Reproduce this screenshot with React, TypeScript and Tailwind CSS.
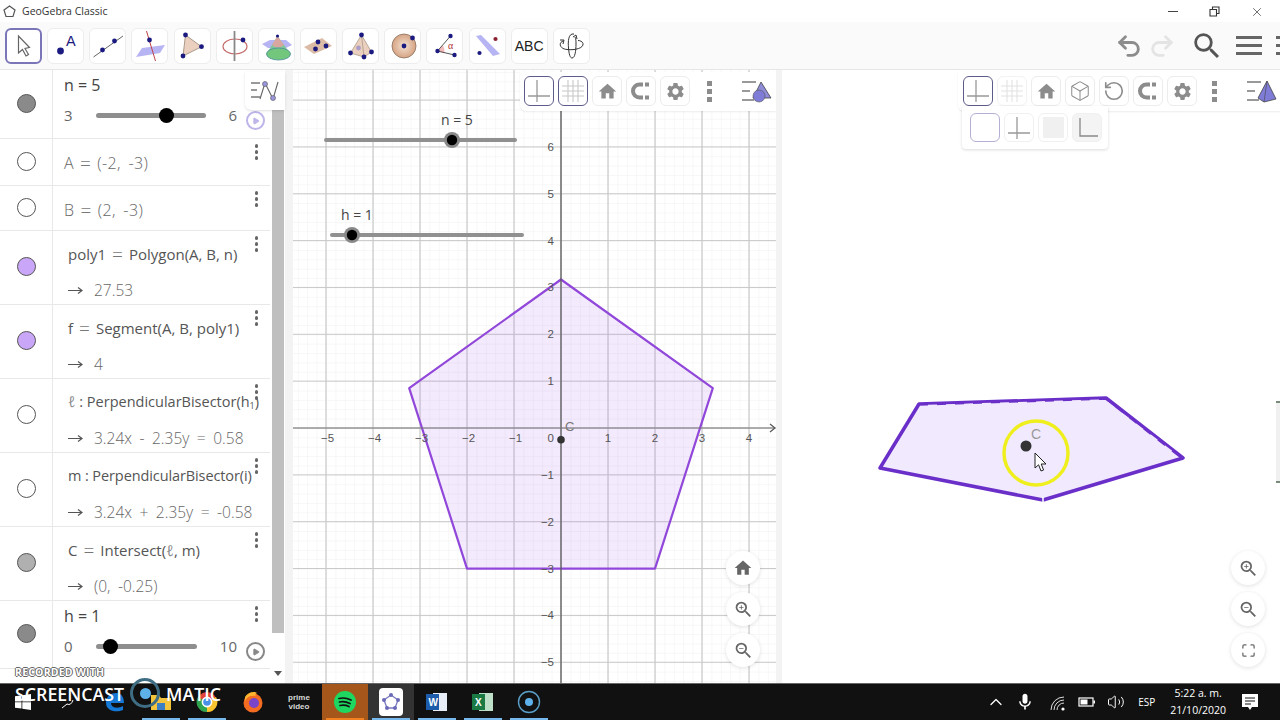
import { Maximize, Undo2, Redo2, Play, X, ChevronUp, Volume2, Box, RotateCw } from "lucide-react";
import { MdHome, MdSettings, MdZoomIn, MdZoomOut, MdSearch, MdMic } from "react-icons/md";
import type { ReactNode } from "react";

const mathFont = "font-['Open_Sans',sans-serif]";
const NAVY = "#1a1a80";

function ToolBtn({ selected, children }: { selected?: boolean; children: ReactNode }) {
  return (
    <div className={`flex h-9 w-[37px] items-center justify-center rounded-md bg-white ${selected ? "border-2 border-[#7a76b8]" : "border border-[#ededed]"}`}>
      <svg width="32" height="32" viewBox="0 0 32 32">{children}</svg>
    </div>
  );
}

const Dot = ({ x, y, r = 2.4, c = NAVY }: { x: number; y: number; r?: number; c?: string }) => <circle cx={x} cy={y} r={r} fill={c} />;

function Toolbar() {
  return (
    <div className="flex h-12 shrink-0 items-center border-b border-[#e6e6e6] bg-[#fafafa] pl-[5px]">
      <div className="flex gap-[5.15px]">
        <ToolBtn selected><path d="M10.5 6 L10.5 23 L14.5 19.5 L18 26 L20.5 24.5 L17 18.5 L21.5 17.5 Z" fill="#fff" stroke="#666" strokeWidth="1.2" /></ToolBtn>
        <ToolBtn><Dot x={10.5} y={21} r={3.4} /><text x="16" y="16" fontSize="14.5" fill={NAVY} fontFamily="Liberation Sans">A</text></ToolBtn>
        <ToolBtn>
          <line x1="1.5" y1="27" x2="31" y2="6" stroke="#666" strokeWidth="1" />
          <Dot x={10.5} y={20} /><Dot x={22.5} y={11} />
        </ToolBtn>
        <ToolBtn>
          <polygon points="2,27 8,18 31,15 26,23" fill="#b7b4f4" />
          <line x1="12.5" y1="1" x2="21.5" y2="31" stroke="#c0404a" strokeWidth="1" />
          <Dot x={15.5} y={10} />
        </ToolBtn>
        <ToolBtn>
          <polygon points="9.5,5 7,26 25.5,16.7" fill="#ecd0bf" stroke="#a98" strokeWidth="1" />
          <Dot x={9.5} y={5} /><Dot x={7} y={26} /><Dot x={25.5} y={16.7} />
        </ToolBtn>
        <ToolBtn>
          <ellipse cx="17" cy="16.5" rx="12" ry="7.5" fill="#fff" stroke="#c46a6a" strokeWidth="1.1" />
          <line x1="16.5" y1="1" x2="16.5" y2="31" stroke="#888" strokeWidth="1.8" />
          <Dot x={25} y={10} />
        </ToolBtn>
        <ToolBtn>
          <polygon points="2,14 10,10 26,10 32,15 26,18 8,18" fill="#b7b4f4" />
          <polygon points="17.5,6 6.5,24 30.5,24" fill="#7fc79a" />
          <path d="M12 15 Q18 20 24 15 L17.5 6 Z" fill="#d9a7a0" />
          <ellipse cx="18.5" cy="24" rx="12" ry="6" fill="#73c77d" stroke="#4a8a9a" strokeWidth="0.8" />
          <Dot x={17.5} y={6} r={1.6} />
        </ToolBtn>
        <ToolBtn>
          <polygon points="2,17 20,8 30,16 12,24" fill="#dcbba6" />
          <Dot x={16} y={12} /><Dot x={13.5} y={19} /><Dot x={24} y={16} />
        </ToolBtn>
        <ToolBtn>
          <polygon points="16.5,5 5.5,23 19,27 26.5,22" fill="#ecd0bf" stroke="#a98" strokeWidth="0.8" />
          <path d="M16.5 5 L19 27" stroke="#a98" strokeWidth="0.8" />
          <circle cx="13.5" cy="18" r="2.4" fill="#a99cc6" />
          <Dot x={16.5} y={5} /><Dot x={5.5} y={23} /><Dot x={26.5} y={22} /><Dot x={19} y={27} />
        </ToolBtn>
        <ToolBtn>
          <defs>
            <radialGradient id="sphere"><stop offset="0" stopColor="#f3e0d2" /><stop offset="1" stopColor="#d6a483" /></radialGradient>
          </defs>
          <circle cx="17" cy="16" r="12" fill="url(#sphere)" stroke="#8a7060" strokeWidth="0.8" />
          <Dot x={17} y={16} /><Dot x={25.5} y={8} />
        </ToolBtn>
        <ToolBtn>
          <path d="M8.5 21 L14 15.5 Q16 19 15.5 23.5 Z" fill="#f4b8b8" />
          <path d="M21.5 6 L8.5 21 L25.5 25" fill="none" stroke="#555" strokeWidth="1" />
          <text x="19" y="19" fontSize="10" fill="#b03030" fontFamily="Liberation Serif">α</text>
          <Dot x={21.5} y={6} r={2.2} /><Dot x={8.5} y={21} r={2.2} /><Dot x={25.5} y={25} r={2.2} />
        </ToolBtn>
        <ToolBtn>
          <polygon points="5,6 10,5 29,24 22,26" fill="#b7b4f4" />
          <Dot x={8.5} y={23} r={2.1} /><Dot x={24.5} y={9} r={2.1} c="#8a2030" />
        </ToolBtn>
        <div className="flex h-9 w-[37px] items-center justify-center rounded-md border border-[#ededed] bg-white font-['Liberation_Sans',sans-serif] text-sm text-[#222]">ABC</div>
        <ToolBtn>
          <path d="M8 11 C3 13 5 19 12 19.5 C20 20.5 29 18 28 13.5 C27.5 11.5 25 10.5 23 10.5" fill="none" stroke="#333" strokeWidth="1" />
          <path d="M19 4 C13 3 13 12 13.5 18 C14 24 15 28 17 28 C20 28 21 21 21 14 C21 11 21 9 20 7" fill="none" stroke="#333" strokeWidth="1" />
          <path d="M5 10 L9 10 L8 14 M18 7 L21 5 L22 9" fill="none" stroke="#333" strokeWidth="1" />
        </ToolBtn>
      </div>
      <div className="ml-auto flex items-center overflow-hidden text-[#8c8c8c]">
        <Undo2 className="mr-[5px] h-7 w-7" strokeWidth={2.4} />
        <Redo2 className="mr-[14px] h-7 w-7 text-[#e4e4e4]" strokeWidth={2.4} />
        <MdSearch className="mr-[12px] h-[34px] w-[34px] text-[#555]" />
        <div className="mr-[14px] flex w-[26px] flex-col gap-[5px]">
          <span className="h-[3px] bg-[#666]" /><span className="h-[3px] bg-[#666]" /><span className="h-[3px] bg-[#666]" />
        </div>
        <div className="-mr-[14px] flex w-[18px] flex-col gap-[5px]">
          <span className="h-[3px] bg-[#666]" /><span className="h-[3px] bg-[#666]" /><span className="h-[3px] bg-[#666]" />
        </div>
      </div>
    </div>
  );
}

function Marble({ fill }: { fill: string }) {
  return <span className="h-[19px] w-[19px] rounded-full border border-[#555]" style={{ background: fill }} />;
}

function AlgebraRow({ h, fill, children, noDots }: { h: string; fill: string; children: ReactNode; noDots?: boolean }) {
  return (
    <div className={`relative flex shrink-0 border-b border-[#e8e8e8] ${h}`}>
      <div className="flex w-[53px] shrink-0 items-center justify-center border-r border-[#e8e8e8] pb-[2px]">
        <Marble fill={fill} />
      </div>
      <div className={`min-w-0 flex-1 whitespace-nowrap text-[15px] text-[#555] ${mathFont}`}>{children}</div>
      {!noDots && (
        <div className="absolute right-[12px] top-[5px] flex flex-col gap-[2.5px]">
          <span className="h-[3.5px] w-[3.5px] rounded-full bg-[#666]" />
          <span className="h-[3.5px] w-[3.5px] rounded-full bg-[#666]" />
          <span className="h-[3.5px] w-[3.5px] rounded-full bg-[#666]" />
        </div>
      )}
    </div>
  );
}

const Eq = () => <span className="mx-[6px] align-[-1px] text-[19px] font-light leading-none text-[#777]">=</span>;

function Arrow() {
  return (
    <svg className="mr-[11px] shrink-0" width="15" height="9" viewBox="0 0 15 9">
      <path d="M0 4.5H14M10 1.5L14 4.5L10 7.5" fill="none" stroke="#555" strokeWidth="1.2" />
    </svg>
  );
}

function TwoLine({ top, bottom, topClass }: { top: ReactNode; bottom: string; topClass?: string }) {
  return (
    <div className="flex h-full flex-col justify-between pb-[2px] pl-[15px] pt-[13px]">
      <div className={`leading-[20px] ${topClass ?? ""}`}>{top}</div>
      <div className="flex items-center text-[15.5px] font-light text-[#666] [word-spacing:3.5px]">
        <Arrow />
        {bottom}
      </div>
    </div>
  );
}

function SliderLine({ label, min, max, pos, w, playColor }: { label: string; min: string; max: string; pos: string; w: string; playColor: string }) {
  return (
    <div className="relative h-full pl-[11px] pt-[3px] text-[16px]">
      <div className="leading-[24px] text-[#444]">{label}</div>
      <div className="mt-[6px] flex items-center leading-[24px] text-[#666]">
        <span className="w-[32px] text-[15px]">{min}</span>
        <div className={`relative h-[5px] rounded-sm bg-[#8e8e8e] ${w}`}>
          <span className={`absolute -top-[5px] h-[15px] w-[15px] rounded-full bg-black ${pos}`} />
        </div>
      </div>
      <span className="absolute right-[33px] top-[33px] text-[15px] leading-[24px] text-[#666]">{max}</span>
      <span className={`absolute right-[5px] top-[41px] flex h-[19px] w-[19px] items-center justify-center rounded-full border-2 ${playColor}`}>
        <Play className="h-2 w-2 fill-current" />
      </span>
    </div>
  );
}

const Ell = () => <i className="text-[#888]">ℓ</i>;

function AlgebraPanel() {
  return (
    <div className="relative flex w-[285px] shrink-0 bg-white">
      <div className="flex w-[270px] shrink-0 flex-col">
        <AlgebraRow h="h-[69px]" fill="#8a8a8a" noDots>
          <SliderLine label="n = 5" min="3" max="6" pos="left-[63px]" w="w-[110px]" playColor="text-[#bdb6ea] border-[#bdb6ea]" />
        </AlgebraRow>
        <AlgebraRow h="h-[47px]" fill="#fff"><div className="pl-[11px] pt-[12px] text-[16px] font-light tracking-[0.4px] text-[#666] [word-spacing:3px]">A<Eq />(-2, -3)</div></AlgebraRow>
        <AlgebraRow h="h-[45px]" fill="#fff"><div className="pl-[11px] pt-[12px] text-[16px] font-light tracking-[0.4px] text-[#666] [word-spacing:3px]">B<Eq />(2, -3)</div></AlgebraRow>
        <AlgebraRow h="h-[74px]" fill="#c9a6f7"><TwoLine top={<>poly1<Eq />Polygon(A, B, n)</>} bottom="27.53" /></AlgebraRow>
        <AlgebraRow h="h-[74px]" fill="#c9a6f7"><TwoLine top={<>f<Eq />Segment(A, B, poly1)</>} bottom="4" /></AlgebraRow>
        <AlgebraRow h="h-[74px]" fill="#fff"><TwoLine topClass="text-[14.5px]" top={<><Ell /> : PerpendicularBisector(h<sub className="text-[9px]">1</sub>)</>} bottom="3.24x - 2.35y = 0.58" /></AlgebraRow>
        <AlgebraRow h="h-[74px]" fill="#fff"><TwoLine topClass="text-[14.5px] tracking-[-0.1px]" top="m : PerpendicularBisector(i)" bottom="3.24x + 2.35y = -0.58" /></AlgebraRow>
        <AlgebraRow h="h-[74px]" fill="#b0b0b0"><TwoLine top={<>C<Eq />Intersect(<Ell />, m)</>} bottom="(0, -0.25)" /></AlgebraRow>
        <AlgebraRow h="h-[68px]" fill="#8a8a8a">
          <SliderLine label="h = 1" min="0" max="10" pos="left-[7px]" w="w-[101px]" playColor="text-[#888] border-[#888]" />
        </AlgebraRow>
      </div>
      <div className="flex flex-1 flex-col pt-[40px]">
        <div className="mx-auto h-[523px] w-[12px] bg-[#bfbfbf]" />
        <div className="mx-auto mt-[38px] h-0 w-0 border-x-[4px] border-t-[5px] border-x-transparent border-t-[#555]" />
      </div>
      <div className="absolute right-0 top-[2px] flex h-[38px] w-[40px] items-center justify-center rounded-bl-md bg-white shadow-sm">
        <svg width="30" height="24" viewBox="0 0 30 24">
          <path d="M1 4h9M1 11h6M1 18h9" stroke="#999" strokeWidth="2" />
          <path d="M10 20 L15 4 L23 20 L28 3" fill="none" stroke="#666" strokeWidth="1.1" />
          <circle cx="15" cy="5" r="2.5" fill="#9a96dd" stroke="#555" strokeWidth="0.6" />
          <circle cx="23" cy="19" r="2.5" fill="#9a96dd" stroke="#555" strokeWidth="0.6" />
        </svg>
      </div>
    </div>
  );
}

function GridSvg() {
  const xs = [-5, -4, -3, -2, -1, 1, 2, 3, 4];
  const ys = [6, 5, 4, 3, 2, 1, -1, -2, -3, -4, -5];
  const X = (v: number) => 268 + v * 47;
  const Y = (v: number) => 358 - v * 46.85;
  return (
    <svg className="absolute inset-0" width="483" height="613">
      <defs>
        <pattern id="minor" x="268" y="358" width="9.4" height="9.37" patternUnits="userSpaceOnUse">
          <path d="M9.4 0H0V9.37" fill="none" stroke="#f0f0f0" strokeWidth="1" />
        </pattern>
      </defs>
      <rect width="483" height="613" fill="url(#minor)" />
      {[-5, -4, -3, -2, -1, 0, 1, 2, 3, 4].map((v) => <line key={v} x1={X(v)} x2={X(v)} y1="0" y2="613" stroke="#cdcdcd" strokeWidth="1.3" />)}
      {[-5, -4, -3, -2, -1, 0, 1, 2, 3, 4, 5, 6, 7, 8].map((v) => <line key={v} y1={Y(v)} y2={Y(v)} x1="0" x2="483" stroke="#c8c8c8" />)}
      <polygon points={`${X(-2)},${Y(-3)} ${X(2)},${Y(-3)} ${X(3.23)},${Y(0.85)} ${X(0)},${Y(3.17)} ${X(-3.23)},${Y(0.85)}`} fill="#b46cf0" fillOpacity="0.14" stroke="#9148da" strokeWidth="2.2" strokeLinejoin="round" />
      <line x1={X(0)} x2={X(0)} y1="40" y2="613" stroke="#555" strokeWidth="1.2" />
      <line x1="0" x2="481" y1={Y(0)} y2={Y(0)} stroke="#777" strokeWidth="1.2" />
      <path d="M477 354 L482 358 L477 362" fill="none" stroke="#555" strokeWidth="1.2" />
      {xs.map((v) => (
        <text key={v} x={X(v) + (v < 0 ? 1.5 : 0)} y={Y(0) + 14} textAnchor="middle" fontSize="11.5" fill="#555" fontFamily="Liberation Sans">{v < 0 ? `−${-v}` : v}</text>
      ))}
      {ys.map((v) => (
        <text key={v} x={X(0) - 7} y={Y(v) + 4} textAnchor="end" fontSize="11.5" fill="#555" fontFamily="Liberation Sans">{v < 0 ? `−${-v}` : v}</text>
      ))}
      <text x={X(0) - 7} y={Y(0) + 14} textAnchor="end" fontSize="11.5" fill="#555" fontFamily="Liberation Sans">0</text>
      <circle cx={X(0)} cy={Y(-0.25)} r="3.8" fill="#333" />
      <text x={X(0) + 4} y={Y(0) + 3} fontSize="13" fill="#777" fontFamily="Liberation Sans">C</text>
      {/* sliders drawn on the view */}
      <line x1="33" x2="222" y1="70" y2="70" stroke="#909090" strokeWidth="4" strokeLinecap="round" />
      <circle cx="159" cy="70" r="8" fill="#888" />
      <circle cx="159" cy="70" r="5.2" fill="#000" />
      <text x="148" y="55" fontSize="14" fill="#444" fontFamily="Open Sans">n = 5</text>
      <line x1="39" x2="229" y1="165" y2="165" stroke="#909090" strokeWidth="4" strokeLinecap="round" />
      <circle cx="59" cy="165" r="8" fill="#888" />
      <circle cx="59" cy="165" r="5.2" fill="#000" />
      <text x="48" y="150" fontSize="14" fill="#444" fontFamily="Open Sans">h = 1</text>
    </svg>
  );
}

function SmallBtn({ active, dim, children }: { active?: boolean; dim?: boolean; children: ReactNode }) {
  return (
    <div className={`flex h-[30px] w-[30px] items-center justify-center rounded-md bg-white ${active ? "border border-[#5c5c8a]" : dim ? "border border-[#f2f2f2]" : "border border-[#ececec]"}`}>
      {children}
    </div>
  );
}

const AxesIcon = () => <svg width="24" height="24" viewBox="0 0 24 24"><path d="M10 1V23M1 17H23" stroke="#999" strokeWidth="1.3" /></svg>;
const GridIcon = ({ c = "#c8c8c8" }: { c?: string }) => <svg width="24" height="24" viewBox="0 0 24 24"><path d="M7 1V23M12 1V23M17 1V23M1 7H23M1 12H23M1 17H23" stroke={c} strokeWidth="1.1" /></svg>;
const HomeIcon = () => <MdHome className="h-[21px] w-[21px] text-[#8c8c8c]" />;
const GearIcon = () => <MdSettings className="h-[21px] w-[21px] text-[#8c8c8c]" />;

function MagnetIcon() {
  return (
    <svg width="22" height="20" viewBox="0 0 22 20">
      <path d="M13 3.5H9.5A6.5 6.5 0 0 0 9.5 16.5H13" fill="none" stroke="#8c8c8c" strokeWidth="4" />
      <path d="M15 3.5H19M15 16.5H19" stroke="#8c8c8c" strokeWidth="4" />
    </svg>
  );
}

function StyleIcon({ children }: { children: ReactNode }) {
  return (
    <svg width="32" height="26" viewBox="0 0 32 26">
      <path d="M0 4h14M0 13h8M0 22h12" stroke="#999" strokeWidth="2" />
      {children}
    </svg>
  );
}

function SquareDots({ className }: { className: string }) {
  return (
    <div className={`flex h-[30px] w-[20px] flex-col items-center justify-center gap-[3px] ${className}`}>
      <span className="h-[5px] w-[5px] bg-[#8c8c8c]" /><span className="h-[5px] w-[5px] bg-[#8c8c8c]" /><span className="h-[5px] w-[5px] bg-[#8c8c8c]" />
    </div>
  );
}

function RoundBtn({ children }: { children: ReactNode }) {
  return <div className="flex h-[34px] w-[34px] items-center justify-center rounded-full bg-white text-[#666] shadow-[0_1px_4px_rgba(0,0,0,0.12)]">{children}</div>;
}

function GraphPanel() {
  return (
    <div className="relative w-[483px] shrink-0 overflow-hidden bg-white">
      <GridSvg />
      <div className="absolute right-0 top-[2px] flex h-[39px] w-[256px] items-start gap-1 rounded-bl-md bg-white pl-1 pt-1 shadow-[0_1px_2px_rgba(0,0,0,0.08)]">
        <SmallBtn active><AxesIcon /></SmallBtn>
        <SmallBtn active><GridIcon /></SmallBtn>
        <SmallBtn><HomeIcon /></SmallBtn>
        <SmallBtn><MagnetIcon /></SmallBtn>
        <SmallBtn><GearIcon /></SmallBtn>
        <SquareDots className="ml-[5px]" />
        <div className="ml-[19px] mt-[2px]">
          <StyleIcon>
            <polygon points="19,4 29,20 11,20" fill="#8f8cd8" stroke="#444" strokeWidth="0.8" />
            <circle cx="17" cy="18" r="6" fill="#7f7cd8" stroke="#555" strokeWidth="0.6" />
          </StyleIcon>
        </div>
      </div>
      <div className="absolute bottom-[16px] right-[16px] flex flex-col gap-[7px]">
        <RoundBtn><MdHome className="h-[20px] w-[20px]" /></RoundBtn>
        <RoundBtn><MdZoomIn className="h-[21px] w-[21px]" /></RoundBtn>
        <RoundBtn><MdZoomOut className="h-[21px] w-[21px]" /></RoundBtn>
      </div>
    </div>
  );
}

function Cursor({ className }: { className: string }) {
  return (
    <svg className={className} width="13" height="21" viewBox="0 0 13 21">
      <path d="M1 1V16L4.6 12.8L7 19L9.6 18L7.2 12H12Z" fill="#fff" stroke="#222" strokeWidth="1" />
    </svg>
  );
}

function View3D() {
  return (
    <div className="relative min-w-0 flex-1 overflow-hidden bg-white">
      <div className="absolute left-[176px] top-[2px] h-[39px] w-[330px] rounded-bl-md bg-white pl-[5px] pt-1 shadow-[0_1px_2px_rgba(0,0,0,0.08)]">
        <div className="flex items-start gap-1">
          <SmallBtn active><AxesIcon /></SmallBtn>
          <SmallBtn dim><GridIcon c="#e2e2e2" /></SmallBtn>
          <SmallBtn><HomeIcon /></SmallBtn>
          <SmallBtn><Box className="h-[22px] w-[22px] text-[#8c8c8c]" strokeWidth={1.1} /></SmallBtn>
          <SmallBtn><RotateCw className="h-[22px] w-[22px] -scale-x-100 text-[#8c8c8c]" strokeWidth={1.8} /></SmallBtn>
          <SmallBtn><MagnetIcon /></SmallBtn>
          <SmallBtn><GearIcon /></SmallBtn>
          <SquareDots className="ml-[3px]" />
          <div className="ml-[19px] mt-[2px]">
            <StyleIcon>
              <polygon points="20,3 29,21 17,24 11,20" fill="#7f7cd8" stroke="#444" strokeWidth="0.8" />
              <path d="M20 3L17 24" stroke="#444" strokeWidth="0.6" />
            </StyleIcon>
          </div>
        </div>
      </div>
      <div className="absolute left-[180px] top-[36px] flex h-[43px] w-[146px] items-center gap-[4px] rounded-b bg-white pl-2 shadow-[0_1px_3px_rgba(0,0,0,0.15)]">
        <div className="h-[29px] w-[30px] rounded-md border border-[#b4b0d4]" />
        <div className="flex h-[29px] w-[30px] items-center justify-center rounded-md border border-[#f0f0f0]"><AxesIcon /></div>
        <div className="flex h-[29px] w-[30px] items-center justify-center rounded-md border border-[#f0f0f0]"><span className="h-[21px] w-[21px] bg-[#f0f0f0]" /></div>
        <div className="flex h-[29px] w-[30px] items-center justify-center rounded-md border border-[#f0f0f0] bg-[#f4f4f4]">
          <svg width="24" height="24" viewBox="0 0 24 24"><path d="M5 2V20H23" fill="none" stroke="#888" strokeWidth="1.3" /></svg>
        </div>
      </div>
      {/* polygon in the 3D view, the yellow ring and the pointer are drawn over the canvas */}
      <svg className="absolute left-0 top-0" width="498" height="613">
        <polygon points="98,398 137,334 324,328 401,388 261,430" fill="#f1e9fd" stroke="#6a2fc9" strokeWidth="3.5" strokeLinejoin="round" />
        <path d="M146 335.5 L322 330 L396 386" fill="none" stroke="#f1e9fd" strokeWidth="1.5" strokeDasharray="9 9" />
        <line x1="261" y1="427" x2="261" y2="433" stroke="#fff" strokeWidth="1.5" />
        <circle cx="254" cy="383" r="32" fill="none" stroke="#efef1e" strokeWidth="3.5" />
        <circle cx="244" cy="376" r="5.5" fill="#333" />
        <text x="249" y="369" fontSize="14" fill="#999" fontFamily="Liberation Sans">C</text>
      </svg>
      <Cursor className="absolute left-[252px] top-[382px]" />
      <div className="absolute right-0 top-[331px] h-[82px] w-[4px] border-y-2 border-y-[#7a8a78] bg-[#f0f0f0]" />
      <div className="absolute bottom-[16px] right-[15px] flex flex-col gap-[7px]">
        <RoundBtn><MdZoomIn className="h-[21px] w-[21px]" /></RoundBtn>
        <RoundBtn><MdZoomOut className="h-[21px] w-[21px]" /></RoundBtn>
        <RoundBtn><Maximize className="h-[15px] w-[15px]" /></RoundBtn>
      </div>
    </div>
  );
}

function TaskIcon({ bg, line, children }: { bg?: string; line?: string; children?: ReactNode }) {
  return (
    <div className={`relative flex h-full w-[46px] shrink-0 items-center justify-center ${bg ?? ""}`}>
      {children}
      {line && <span className={`absolute bottom-0 left-1 right-1 h-[2px] ${line}`} />}
    </div>
  );
}

function Taskbar() {
  return (
    <div className="relative flex h-[37px] shrink-0 items-center border-t border-[#666] bg-[#111111] text-white">
      <TaskIcon><svg width="16" height="16" viewBox="0 0 16 16" fill="#fff"><path d="M0 2.2L6.5 1.3V7.5H0ZM7.3 1.2L16 0V7.5H7.3ZM0 8.3H6.5V14.6L0 13.8ZM7.3 8.3H16V16L7.3 14.8Z" /></svg></TaskIcon>
      <TaskIcon><svg width="16" height="16" viewBox="0 0 16 16"><path d="M1 14 L6 10 Q10 12 12 6" fill="none" stroke="#fff" strokeWidth="1" /></svg></TaskIcon>
      <TaskIcon><svg width="22" height="22" viewBox="0 0 22 22"><path d="M2 12C2 5 7 2 12 2C18 2 20 7 20 12H7C7 17 14 18 19 15V19C12 22 2 20 2 12Z" fill="#1578d4" /></svg></TaskIcon>
      <TaskIcon line="bg-[#76b9ed]"><svg width="22" height="20" viewBox="0 0 22 20"><path d="M1 3H9L11 6H21V18H1Z" fill="#f4c43c" /><rect x="7" y="11" width="8" height="7" fill="#3d7fc4" /></svg></TaskIcon>
      <TaskIcon line="bg-[#76b9ed]"><svg width="22" height="22" viewBox="0 0 22 22"><circle cx="11" cy="11" r="10" fill="#e0443a" /><path d="M11 11L20 6A10 10 0 0 1 11 21Z" fill="#f8c530" /><path d="M11 11L11 21A10 10 0 0 1 2 6Z" fill="#2fa44f" /><circle cx="11" cy="11" r="4.6" fill="#4a8fe8" stroke="#fff" strokeWidth="1.6" /></svg></TaskIcon>
      <TaskIcon><svg width="22" height="22" viewBox="0 0 22 22"><circle cx="11" cy="12" r="9.5" fill="#f46b22" /><path d="M3 6C6 1 12 0 15 2C13 3 13 4 14 5C8 4 5 6 3 10Z" fill="#ffb52e" /><circle cx="12" cy="12" r="5" fill="#7a45c8" /></svg></TaskIcon>
      <TaskIcon><span className="text-center font-['Liberation_Sans',sans-serif] text-[8px] font-bold leading-[9px] text-[#d8d8d8]">prime<br />video</span></TaskIcon>
      <TaskIcon bg="bg-[#a5571b]" line="bg-[#f08020]"><svg width="24" height="24" viewBox="0 0 24 24"><circle cx="12" cy="12" r="11" fill="#1ed760" /><path d="M6 8.5Q12 7 18 10M6.5 12Q12 11 17 13.5M7 15.5Q12 14.5 16 16.5" fill="none" stroke="#111" strokeWidth="1.7" strokeLinecap="round" /></svg></TaskIcon>
      <TaskIcon bg="bg-[#333333]" line="bg-[#76b9ed]">
        <div className="flex h-[28px] w-[24px] items-center justify-center rounded-sm bg-white">
          <svg width="20" height="20" viewBox="0 0 20 20"><polygon points="10,3 17,8 14,16 6,16 3,8" fill="none" stroke="#7a7ac0" strokeWidth="1.3" /><g fill="#6a6ab8"><circle cx="10" cy="3" r="2" /><circle cx="17" cy="8" r="2" /><circle cx="14" cy="16" r="2" /><circle cx="6" cy="16" r="2" /><circle cx="3" cy="8" r="2" /></g></svg>
        </div>
      </TaskIcon>
      <TaskIcon line="bg-[#76b9ed]"><svg width="24" height="24" viewBox="0 0 24 24"><rect x="8" y="3" width="14" height="18" fill="#e8eef8" /><rect x="1" y="4" width="13" height="16" fill="#1d5bab" /><text x="3.5" y="16" fontSize="10" fontWeight="700" fill="#fff" fontFamily="Liberation Sans">W</text></svg></TaskIcon>
      <TaskIcon line="bg-[#76b9ed]"><svg width="24" height="24" viewBox="0 0 24 24"><rect x="8" y="3" width="14" height="18" fill="#bfe0c8" /><rect x="1" y="4" width="13" height="16" fill="#1b7a43" /><text x="4" y="16" fontSize="10" fontWeight="700" fill="#fff" fontFamily="Liberation Sans">X</text></svg></TaskIcon>
      <TaskIcon line="bg-[#76b9ed]"><svg width="24" height="24" viewBox="0 0 24 24"><circle cx="12" cy="12" r="10.5" fill="none" stroke="#5a9fc8" strokeWidth="1.4" /><circle cx="12" cy="12" r="4" fill="#5eb0e8" /></svg></TaskIcon>
      <div className="ml-auto flex items-center pr-[21px] font-['Open_Sans',sans-serif]">
        <ChevronUp className="mr-[9px] h-5 w-5" strokeWidth={1.5} />
        <MdMic className="mr-[13.5px] h-5 w-5" />
        <svg className="mr-[12.5px]" width="17" height="17" viewBox="0 0 17 17">
          <path d="M2 16A13 13 0 0 1 15 3M5 16A10 10 0 0 1 15 6M8 16A7 7 0 0 1 15 9" fill="none" stroke="#ddd" strokeWidth="1" />
          <circle cx="14" cy="15" r="1.6" fill="#fff" />
        </svg>
        <svg className="mr-[11px]" width="18" height="18" viewBox="0 0 18 18">
          <rect x="1" y="5" width="14" height="8" fill="none" stroke="#fff" strokeWidth="1.2" />
          <rect x="2.5" y="6.5" width="7" height="5" fill="#fff" />
          <rect x="15.5" y="7.5" width="1.5" height="3" fill="#fff" />
        </svg>
        <Volume2 className="mr-[13px] h-[18px] w-[18px]" strokeWidth={1.3} />
        <span className="mr-[15px] text-[10px]">ESP</span>
        <div className="mr-[15px] text-center text-[10.5px] leading-[17px]">
          <div>5:22 a. m.</div>
          <div>21/10/2020</div>
        </div>
        <svg width="18" height="18" viewBox="0 0 18 18">
          <path d="M1 1H17V14H11L9 17L7 14H1Z" fill="#fff" />
          <path d="M4 5H14M4 8H14M4 11H10" stroke="#111" strokeWidth="1" />
        </svg>
      </div>
    </div>
  );
}

function Watermark() {
  return (
    <div className="pointer-events-none absolute left-[15px] top-[665px] font-['Open_Sans',sans-serif] text-white">
      <div className="text-[10.5px] font-bold leading-[14px] tracking-[0.2px] [text-shadow:-1px_0_#666,1px_0_#666,0_-1px_#666,0_1px_#666]">RECORDED WITH</div>
      <div className="flex items-center text-[17.8px] font-semibold leading-[24px]">
        SCREENCAST
        <span className="ml-[6px] mr-[6px] flex h-[30px] w-[30px] -translate-y-[1px] items-center justify-center rounded-full border-[3px] border-[#3f6d84]">
          <span className="h-[11px] w-[11px] rounded-full bg-[#5eb0e8]" />
        </span>
        MATIC
      </div>
    </div>
  );
}

export default function App() {
  return (
    <div className="relative flex h-[720px] w-[1280px] flex-col overflow-hidden bg-white">
      <div className="flex h-[22px] shrink-0 items-center bg-white pl-[3px] pt-px font-['Open_Sans',sans-serif] text-[10.5px] text-[#333]">
        <svg className="mr-[6px]" width="13" height="13" viewBox="0 0 13 13"><polygon points="6.5,1 12,5 10,11.5 3,11.5 1,5" fill="none" stroke="#555" strokeWidth="1.2" /></svg>
        GeoGebra Classic
        <div className="ml-auto flex items-center text-[#444]">
          <span className="mr-[31px] h-px w-[10px] bg-[#444]" />
          <svg className="mr-[30px]" width="11" height="11" viewBox="0 0 11 11"><path d="M1 3.5H7.5V10H1ZM3.5 3V1H10V7.5H8" fill="none" stroke="#333" strokeWidth="1.1" /></svg>
          <X className="mr-[16px] h-[14px] w-[14px]" strokeWidth={1.3} />
        </div>
      </div>
      <Toolbar />
      <div className="flex min-h-0 flex-1">
        <AlgebraPanel />
        <div className="w-2 shrink-0 bg-[#f3f3f3]" />
        <GraphPanel />
        <div className="w-[6px] shrink-0 bg-[#f3f3f3]" />
        <View3D />
      </div>
      <Taskbar />
      <Watermark />
    </div>
  );
}
